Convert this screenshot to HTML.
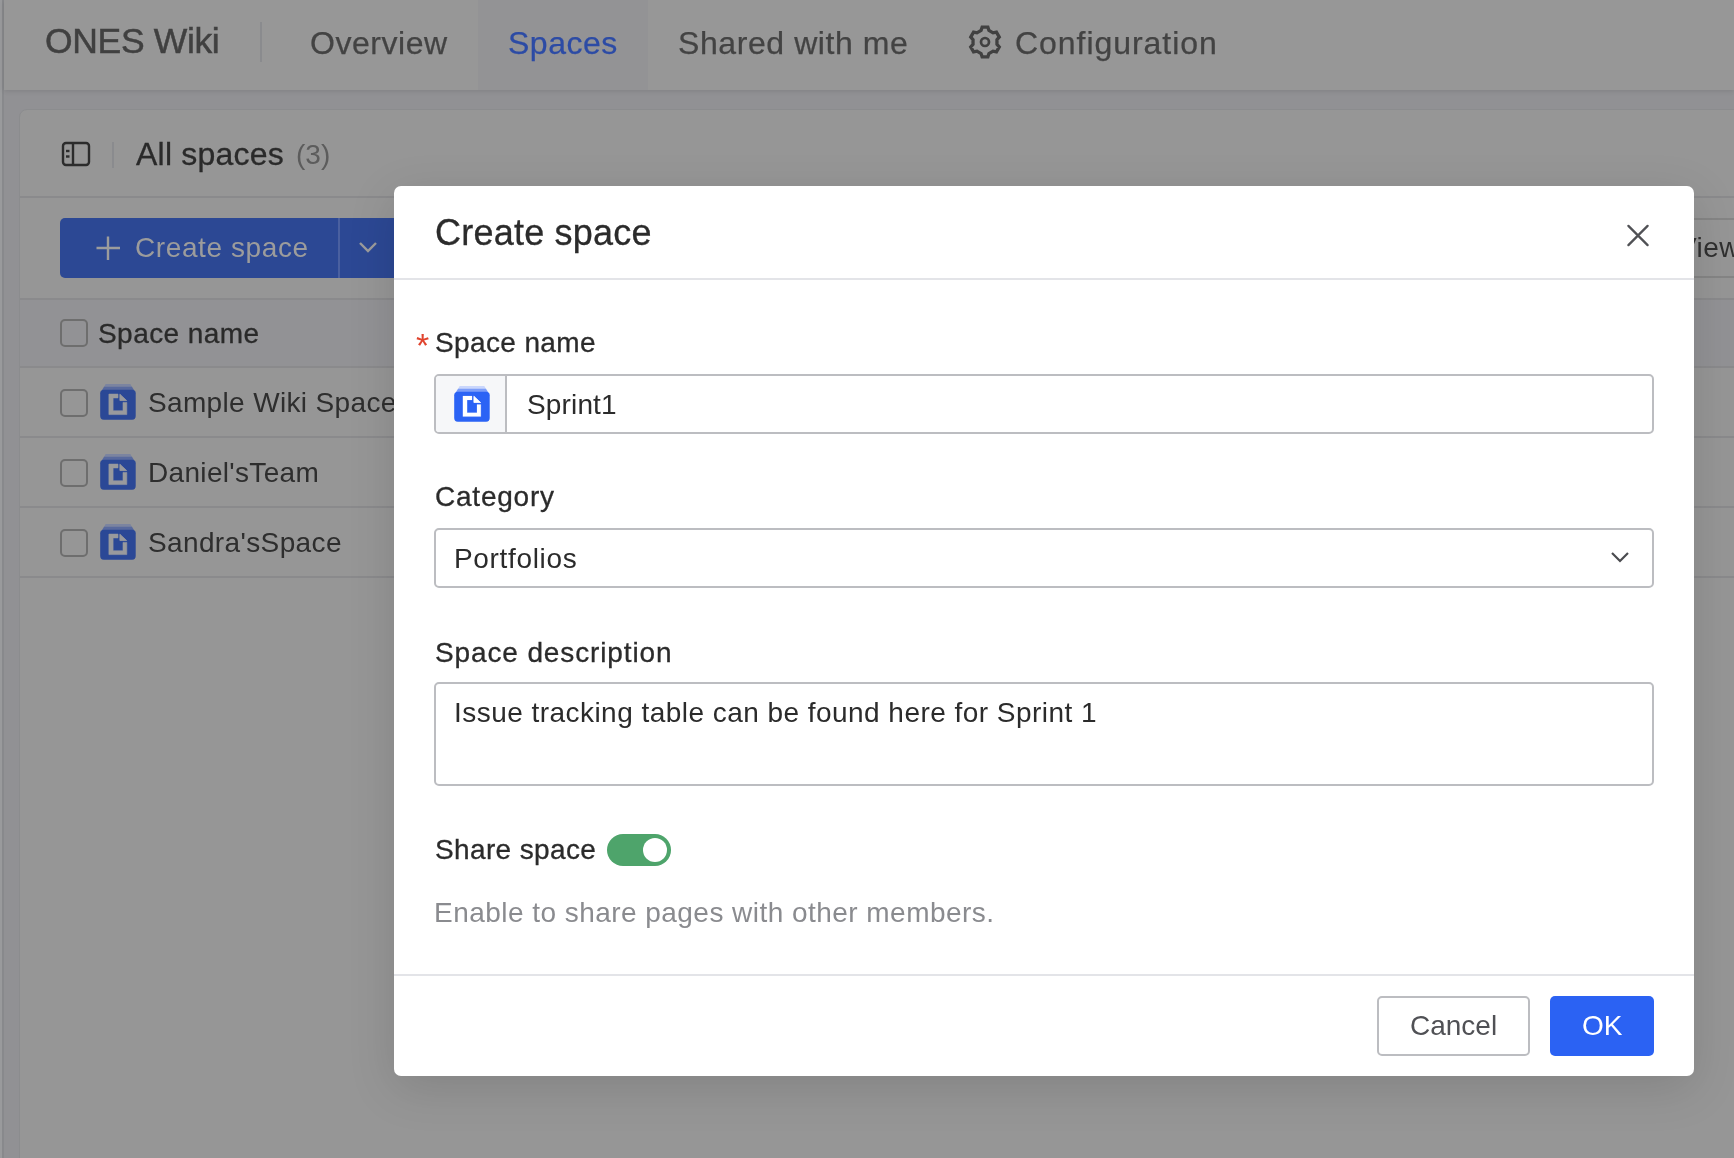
<!DOCTYPE html>
<html><head><meta charset="utf-8">
<style>
*{margin:0;padding:0;box-sizing:border-box}
html,body{width:1734px;height:1158px;overflow:hidden;background:#919194;font-family:"Liberation Sans",sans-serif;position:relative}
.a{position:absolute;white-space:nowrap}
.t28{font-size:28px;line-height:28px}
.t32{font-size:32px;line-height:32px}
.t36{font-size:36px;line-height:36px}
.med{-webkit-text-stroke:0.3px currentColor}
.a{will-change:transform}
</style></head><body>

<!-- left strip -->
<div class="a" style="left:0;top:0;width:2px;height:1158px;background:#999a9c"></div>
<div class="a" style="left:2px;top:0;width:2px;height:1158px;background:#88898c"></div>

<!-- nav -->
<div class="a" style="left:4px;top:0;width:1730px;height:90px;background:#979797;box-shadow:0 1px 5px rgba(0,0,0,0.12)"></div>
<div class="a" style="left:478px;top:0;width:170px;height:90px;background:#939395"></div>
<div class="a t32" style="left:45px;top:24.2px;font-size:35.5px;line-height:35.5px;color:#404040;letter-spacing:-0.35px;-webkit-text-stroke:0.5px #404040">ONES Wiki</div>
<div class="a" style="left:260px;top:22px;width:2px;height:40px;background:#8a8b8e"></div>
<div class="a t32" style="left:310px;top:27px;color:#434343;letter-spacing:0.55px;-webkit-text-stroke:0.25px #434343">Overview</div>
<div class="a t32" style="left:508px;top:27px;color:#2c4ba5;letter-spacing:0.5px;-webkit-text-stroke:0.25px #2c4ba5">Spaces</div>
<div class="a t32" style="left:678px;top:27px;color:#434343;letter-spacing:0.58px;-webkit-text-stroke:0.25px #434343">Shared with me</div>
<svg class="a" style="left:965px;top:22px" width="40" height="40" viewBox="-20 -20 40 40">
<polygon fill="none" stroke="#414141" stroke-width="3.3" stroke-linejoin="miter" points="-3.95,-11.54 -2.85,-14.83 2.85,-14.83 3.95,-11.54 8.02,-9.19 11.42,-9.88 14.27,-4.94 11.97,-2.35 11.97,2.35 14.27,4.94 11.42,9.88 8.02,9.19 3.95,11.54 2.85,14.83 -2.85,14.83 -3.95,11.54 -8.02,9.19 -11.42,9.88 -14.27,4.94 -11.97,2.35 -11.97,-2.35 -14.27,-4.94 -11.42,-9.88 -8.02,-9.19"/>
<circle cx="0" cy="0" r="4" fill="none" stroke="#414141" stroke-width="2.7"/>
</svg>
<div class="a t32" style="left:1015px;top:27px;color:#434343;letter-spacing:0.95px;-webkit-text-stroke:0.25px #434343">Configuration</div>

<!-- card -->
<div class="a" style="left:19px;top:109px;width:1730px;height:1060px;background:#969696;border:1px solid #8b8c8e;border-radius:8px"></div>
<svg class="a" style="left:60px;top:140px" width="32" height="28" viewBox="0 0 32 28">
<rect x="3" y="3" width="26" height="22" rx="3" fill="none" stroke="#2c2c2c" stroke-width="2.4"/>
<line x1="13" y1="3" x2="13" y2="25" stroke="#2c2c2c" stroke-width="2.4"/>
<line x1="6" y1="11" x2="9.5" y2="11" stroke="#2c2c2c" stroke-width="2.4"/>
<line x1="6" y1="16.5" x2="9.5" y2="16.5" stroke="#2c2c2c" stroke-width="2.4"/>
</svg>
<div class="a" style="left:112px;top:142px;width:2px;height:26px;background:#8a8b8e"></div>
<div class="a t32 med" style="left:135.5px;top:138px;color:#2a2a2a;letter-spacing:0.22px">All spaces</div>
<div class="a t28" style="left:296px;top:141px;color:#5c5c5c">(3)</div>
<div class="a" style="left:20px;top:196px;width:1714px;height:2px;background:#8a8a8c"></div>

<!-- create button -->
<div class="a" style="left:60px;top:218px;width:400px;height:60px;background:#2c4894;border-radius:5px"></div>
<div class="a" style="left:338px;top:218px;width:2px;height:60px;background:#4a60a0"></div>
<svg class="a" style="left:94px;top:234px" width="28" height="28" viewBox="0 0 28 28">
<path d="M14 2.5V26M2.5 14H26" stroke="#9c9c9c" stroke-width="2.4"/>
</svg>
<div class="a t28" style="left:135px;top:234px;color:#9c9c9c;letter-spacing:0.6px">Create space</div>
<svg class="a" style="left:356px;top:238px" width="24" height="20" viewBox="0 0 24 20">
<path d="M4 5L12 13L20 5" fill="none" stroke="#9c9c9c" stroke-width="2.4"/>
</svg>

<!-- view button partially -->
<div class="a" style="left:1600px;top:218px;width:200px;height:60px;border:2px solid #858585;border-radius:5px"></div>
<div class="a t28" style="left:1677.5px;top:234px;color:#303030;letter-spacing:0.4px">View</div>

<!-- table -->
<div class="a" style="left:20px;top:298px;width:1714px;height:70px;background:#929295"></div>
<div class="a" style="left:20px;top:298px;width:1714px;height:2px;background:#8a8a8c"></div>
<div class="a" style="left:20px;top:366px;width:1714px;height:2px;background:#8a8a8c"></div>
<div class="a" style="left:20px;top:436px;width:1714px;height:2px;background:#8a8a8c"></div>
<div class="a" style="left:20px;top:506px;width:1714px;height:2px;background:#8a8a8c"></div>
<div class="a" style="left:20px;top:576px;width:1714px;height:2px;background:#8a8a8c"></div>

<div class="a" style="left:60px;top:319px;width:28px;height:28px;border:2px solid #6e6e6e;border-radius:5px"></div>
<div class="a t28 med" style="left:98px;top:320px;color:#2a2a2a;letter-spacing:0.44px">Space name</div>

<div class="a" style="left:60px;top:389px;width:28px;height:28px;border:2px solid #6e6e6e;border-radius:5px"></div>
<div class="a" style="left:60px;top:459px;width:28px;height:28px;border:2px solid #6e6e6e;border-radius:5px"></div>
<div class="a" style="left:60px;top:529px;width:28px;height:28px;border:2px solid #6e6e6e;border-radius:5px"></div>

<svg class="a" style="left:100px;top:384px" width="36" height="36" viewBox="0 0 36 36"><path d="M5.8 -0.2H30.2L32 2.9H4Z" fill="#7b84a0"/><path d="M4 2.8H32L34 5.9H2Z" fill="#58699d"/><rect x="0.2" y="5.7" width="35.5" height="30" rx="3.6" fill="#2b4896"/><path d="M8.9 10.1H18V13.9H13.1V26.8H23V18.4H26.8V30.6H8.9Z" fill="#999a9d" stroke="#999a9d" stroke-width="0.6" stroke-linejoin="round"/><path d="M19.9 10.2L26.6 16.5H19.9Z" fill="#999a9d" stroke="#999a9d" stroke-width="0.8" stroke-linejoin="round"/></svg>
<svg class="a" style="left:100px;top:454px" width="36" height="36" viewBox="0 0 36 36"><path d="M5.8 -0.2H30.2L32 2.9H4Z" fill="#7b84a0"/><path d="M4 2.8H32L34 5.9H2Z" fill="#58699d"/><rect x="0.2" y="5.7" width="35.5" height="30" rx="3.6" fill="#2b4896"/><path d="M8.9 10.1H18V13.9H13.1V26.8H23V18.4H26.8V30.6H8.9Z" fill="#999a9d" stroke="#999a9d" stroke-width="0.6" stroke-linejoin="round"/><path d="M19.9 10.2L26.6 16.5H19.9Z" fill="#999a9d" stroke="#999a9d" stroke-width="0.8" stroke-linejoin="round"/></svg>
<svg class="a" style="left:100px;top:524px" width="36" height="36" viewBox="0 0 36 36"><path d="M5.8 -0.2H30.2L32 2.9H4Z" fill="#7b84a0"/><path d="M4 2.8H32L34 5.9H2Z" fill="#58699d"/><rect x="0.2" y="5.7" width="35.5" height="30" rx="3.6" fill="#2b4896"/><path d="M8.9 10.1H18V13.9H13.1V26.8H23V18.4H26.8V30.6H8.9Z" fill="#999a9d" stroke="#999a9d" stroke-width="0.6" stroke-linejoin="round"/><path d="M19.9 10.2L26.6 16.5H19.9Z" fill="#999a9d" stroke="#999a9d" stroke-width="0.8" stroke-linejoin="round"/></svg>
<div class="a t28" style="left:148px;top:389px;color:#2e2e2e;letter-spacing:0.35px">Sample Wiki Space</div>
<div class="a t28" style="left:148px;top:459px;color:#2e2e2e;letter-spacing:0.33px">Daniel'sTeam</div>
<div class="a t28" style="left:148px;top:529px;color:#2e2e2e;letter-spacing:0.37px">Sandra'sSpace</div>

<!-- MODAL -->
<div class="a" style="left:394px;top:186px;width:1300px;height:890px;background:#fff;border-radius:7px;box-shadow:0 12px 48px rgba(0,0,0,0.13)"></div>
<div class="a t36 med" style="left:435px;top:215px;color:#2b2b2b;letter-spacing:0.22px">Create space</div>
<svg class="a" style="left:1620px;top:218px" width="36" height="36" viewBox="0 0 36 36">
<path d="M8.4 7.9L27.6 27.1M27.6 7.9L8.4 27.1" stroke="#505155" stroke-width="2.3" stroke-linecap="round"/>
</svg>
<div class="a" style="left:394px;top:278px;width:1300px;height:2px;background:#e3e4e8"></div>

<div class="a" style="left:415.5px;top:328px;font-size:34px;line-height:34px;color:#e0442e">*</div>
<div class="a t28 med" style="left:435px;top:329px;color:#2b2b2b;letter-spacing:0.37px">Space name</div>

<div class="a" style="left:434px;top:374px;width:1220px;height:60px;border:2px solid #bcbdc1;border-radius:5px;overflow:hidden">
  <div class="a" style="left:0;top:0;width:71px;height:56px;background:#f6f7f9;border-right:2px solid #bcbdc1"></div>
</div>
<svg class="a" style="left:454px;top:386px" width="36" height="36" viewBox="0 0 36 36"><path d="M5.8 -0.2H30.2L32 2.9H4Z" fill="#c9d6fc"/><path d="M4 2.8H32L34 5.9H2Z" fill="#7c9df8"/><rect x="0.2" y="5.7" width="35.5" height="30" rx="3.6" fill="#2b63f5"/><path d="M8.9 10.1H18V13.9H13.1V26.8H23V18.4H26.8V30.6H8.9Z" fill="#fff" stroke="#fff" stroke-width="0.2" stroke-linejoin="round"/><path d="M19.9 10.2L26.6 16.5H19.9Z" fill="#fff" stroke="#fff" stroke-width="0.8" stroke-linejoin="round"/></svg>
<div class="a t28" style="left:527px;top:391px;color:#2b2b2b;letter-spacing:0.15px">Sprint1</div>

<div class="a t28 med" style="left:435px;top:483px;color:#2b2b2b;letter-spacing:0.78px">Category</div>
<div class="a" style="left:434px;top:528px;width:1220px;height:60px;border:2px solid #bcbdc1;border-radius:5px"></div>
<div class="a t28" style="left:453.5px;top:545px;color:#2b2b2b;letter-spacing:0.67px">Portfolios</div>
<svg class="a" style="left:1608px;top:546px" width="24" height="20" viewBox="0 0 24 20">
<path d="M4 7L12 15L20 7" fill="none" stroke="#4a4b4f" stroke-width="2.2"/>
</svg>

<div class="a t28 med" style="left:435px;top:639px;color:#2b2b2b;letter-spacing:0.87px">Space description</div>
<div class="a" style="left:434px;top:682px;width:1220px;height:104px;border:2px solid #bcbdc1;border-radius:5px"></div>
<div class="a t28" style="left:453.5px;top:699px;color:#2b2b2b;letter-spacing:0.46px">Issue tracking table can be found here for Sprint 1</div>

<div class="a t28 med" style="left:435px;top:836px;color:#2b2b2b;letter-spacing:0.37px">Share space</div>
<div class="a" style="left:607px;top:834px;width:64px;height:32px;background:#4ea46b;border-radius:16px"></div>
<div class="a" style="left:643px;top:838px;width:24px;height:24px;background:#fff;border-radius:12px"></div>
<div class="a t28" style="left:433.5px;top:899px;color:#8a8b8f;letter-spacing:0.46px">Enable to share pages with other members.</div>

<div class="a" style="left:394px;top:974px;width:1300px;height:2px;background:#e3e4e8"></div>
<div class="a" style="left:1377px;top:996px;width:153px;height:60px;border:2px solid #bcbdc1;border-radius:5px"></div>
<div class="a t28" style="left:1410px;top:1012px;color:#505155">Cancel</div>
<div class="a" style="left:1550px;top:996px;width:104px;height:60px;background:#2b62f3;border-radius:5px"></div>
<div class="a t28" style="left:1582px;top:1012px;color:#fff">OK</div>

</body></html>
